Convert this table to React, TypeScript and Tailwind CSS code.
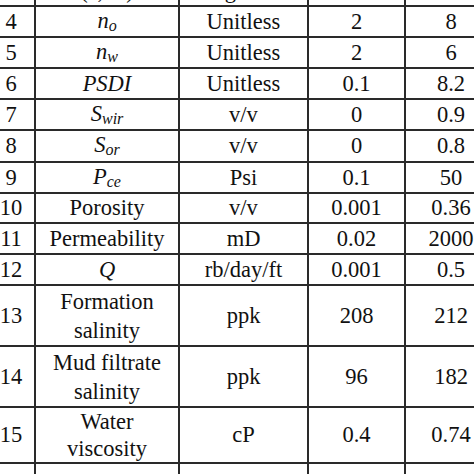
import React from "react";

type Row = {
  no: string;
  name: React.ReactNode;
  unit: string;
  min: string;
  max: string;
  h: string;
};

function Sym({ base, sub }: { base: string; sub?: string }) {
  return (
    <span className="italic">
      {base}
      {sub && <span className="relative top-[3px] text-[16px]">{sub}</span>}
    </span>
  );
}

function Two({ a, b, lh }: { a: string; b: string; lh: string }) {
  return (
    <div className={lh}>
      {a}
      <br />
      {b}
    </div>
  );
}

const rows: Row[] = [
  { no: "3", name: "(a, m)", unit: "g/cc", min: "", max: "", h: "h-[31px]" },
  { no: "4", name: <Sym base="n" sub="o" />, unit: "Unitless", min: "2", max: "8", h: "h-[31px]" },
  { no: "5", name: <Sym base="n" sub="w" />, unit: "Unitless", min: "2", max: "6", h: "h-[31px]" },
  { no: "6", name: <Sym base="PSDI" />, unit: "Unitless", min: "0.1", max: "8.2", h: "h-[31px]" },
  { no: "7", name: <Sym base="S" sub="wir" />, unit: "v/v", min: "0", max: "0.9", h: "h-[31px]" },
  { no: "8", name: <Sym base="S" sub="or" />, unit: "v/v", min: "0", max: "0.8", h: "h-[32px]" },
  { no: "9", name: <Sym base="P" sub="ce" />, unit: "Psi", min: "0.1", max: "50", h: "h-[31px]" },
  { no: "10", name: "Porosity", unit: "v/v", min: "0.001", max: "0.36", h: "h-[30px]" },
  { no: "11", name: "Permeability", unit: "mD", min: "0.02", max: "2000", h: "h-[31px]" },
  { no: "12", name: <Sym base="Q" />, unit: "rb/day/ft", min: "0.001", max: "0.5", h: "h-[31px]" },
  { no: "13", name: <Two a="Formation" b="salinity" lh="leading-[29px]" />, unit: "ppk", min: "208", max: "212", h: "h-[61px]" },
  { no: "14", name: <Two a="Mud filtrate" b="salinity" lh="leading-[29px]" />, unit: "ppk", min: "96", max: "182", h: "h-[61px]" },
  { no: "15", name: <Two a="Water" b="viscosity" lh="leading-[27px]" />, unit: "cP", min: "0.4", max: "0.74", h: "h-[56px]" },
  { no: "16", name: "", unit: "", min: "", max: "", h: "h-[40px]" },
];

const cell = "border-2 border-[#2a2a2a] text-center align-middle p-0";

export default function App() {
  return (
    <div className="h-[474px] w-[474px] overflow-hidden bg-white">
      <table
        className="ml-[-12px] mt-[-26px] w-[509px] table-fixed border-collapse text-[22.5px] leading-[26px] text-[#111]"
        style={{ fontFamily: '"Liberation Serif", "Times New Roman", serif' }}
      >
        <colgroup>
          <col className="w-[47px]" />
          <col className="w-[144px]" />
          <col className="w-[129px]" />
          <col className="w-[97px]" />
          <col className="w-[92px]" />
        </colgroup>
        <tbody>
          {rows.map((r) => (
            <tr key={r.no} className={r.h}>
              <td className={`${cell} border-l-0`}>{r.no}</td>
              <td className={cell}>{r.name}</td>
              <td className={cell}>{r.unit}</td>
              <td className={cell}>{r.min}</td>
              <td className={cell}>{r.max}</td>
            </tr>
          ))}
        </tbody>
      </table>
    </div>
  );
}
